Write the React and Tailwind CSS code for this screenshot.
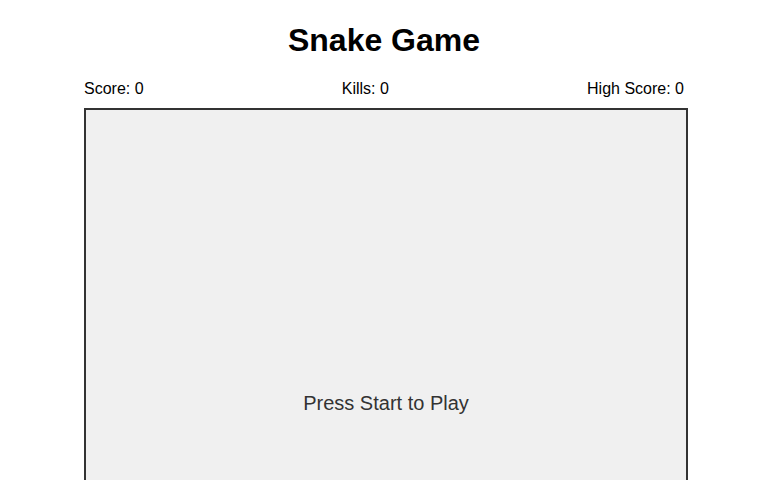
export default function App() {
  const score = 0;
  const kills = 0;
  const highScore = 0;

  return (
    <div className="min-h-screen bg-white font-['Liberation_Sans',Arial,sans-serif] text-black">
      <h1 className="mt-[22px] mb-[21px] text-center text-[32px] font-bold leading-[37px]">Snake Game</h1>

      <div className="mx-auto w-[600px]">
        <div className="flex justify-between text-base leading-[18px]">
          <span>Score: {score}</span>
          <span>Kills: {kills}</span>
          <span>High Score: {highScore}</span>
        </div>

        {/* board */}
        <div className="relative mt-[10px] h-[600px] w-[604px] border-2 border-[#333] bg-[#f0f0f0]">
          <p className="absolute inset-x-0 top-[282px] text-center text-xl leading-[23px] text-[#333]">
            Press Start to Play
          </p>
        </div>
      </div>
    </div>
  );
}
